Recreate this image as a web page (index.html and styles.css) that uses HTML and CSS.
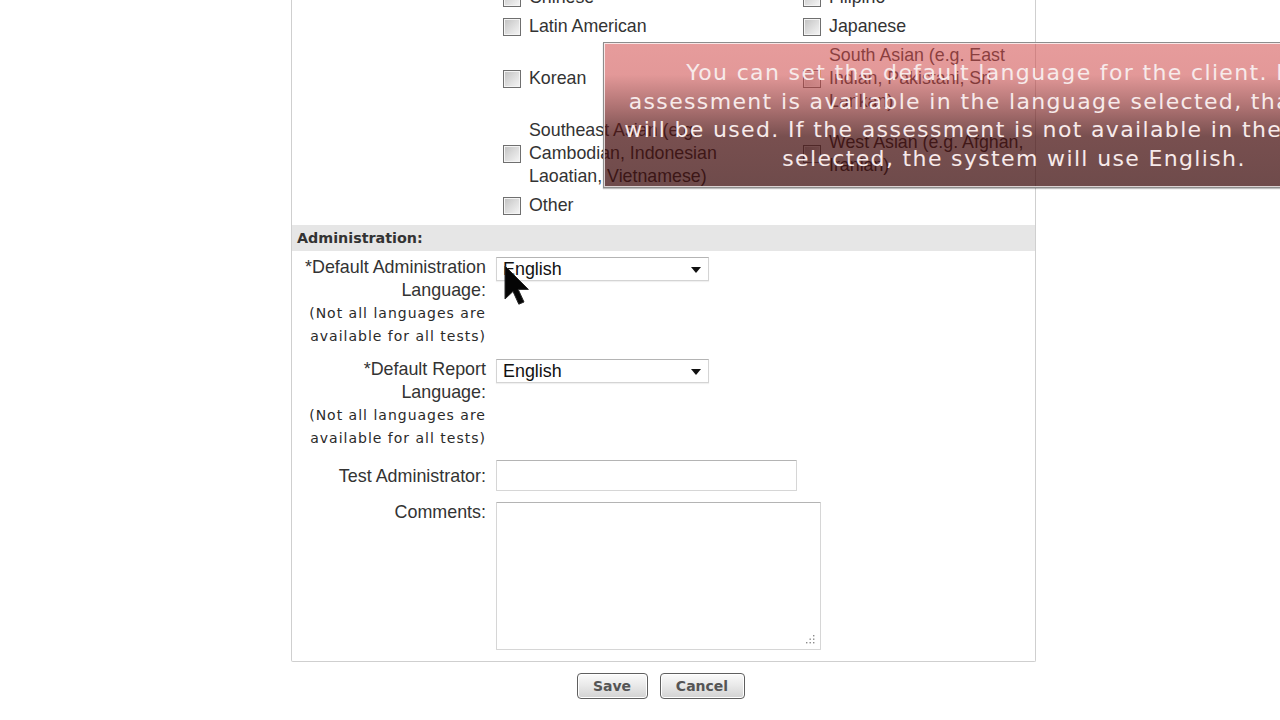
FILE: index.html
```html
<!DOCTYPE html>
<html lang="en">
<head>
<meta charset="utf-8">
<title>Client Details</title>
<link rel="stylesheet" href="styles.css">
</head>
<body>
<div class="page">
  <div class="panel">
    <div class="eth-grid">
      <span class="cb"></span><span class="lbl c1">Chinese</span>
      <span class="cb"></span><span class="lbl c2">Filipino</span>

      <span class="cb"></span><span class="lbl c1">Latin American</span>
      <span class="cb"></span><span class="lbl c2">Japanese</span>

      <span class="cb"></span><span class="lbl c1">Korean</span>
      <span class="cb"></span><span class="lbl c2">South Asian (e.g. East Indian, Pakistani, Sri Lankan)</span>

      <span class="cb"></span><span class="lbl c1">Southeast Asian (e.g. Cambodian, Indonesian Laoatian, Vietnamese)</span>
      <span class="cb"></span><span class="lbl c2">West Asian (e.g. Afghan, Iranian)</span>

      <span class="cb"></span><span class="lbl c1">Other</span>
      <span></span><span></span>
    </div>

    <div class="section-head">Administration:</div>

    <div class="admin-form">
      <div class="f-label">*Default Administration Language:<span class="note">(Not all languages are available for all tests)</span></div>
      <div class="f-ctrl"><div class="select-wrap"><select class="select"><option>English</option></select></div></div>

      <div class="f-label">*Default Report Language:<span class="note">(Not all languages are available for all tests)</span></div>
      <div class="f-ctrl"><div class="select-wrap"><select class="select"><option>English</option></select></div></div>

      <div class="f-label f-label-input">Test Administrator:</div>
      <div class="f-ctrl"><input class="text-input" type="text"></div>

      <div class="f-label">Comments:</div>
      <div class="f-ctrl">
        <div class="ta-wrap">
          <textarea class="textarea"></textarea>
          <svg class="grip" width="9" height="9" viewBox="0 0 9 9"><g fill="#8a8a8a"><rect x="7" y="0" width="1.4" height="1.4"/><rect x="7" y="3.5" width="1.4" height="1.4"/><rect x="3.5" y="3.5" width="1.4" height="1.4"/><rect x="7" y="7" width="1.4" height="1.4"/><rect x="3.5" y="7" width="1.4" height="1.4"/><rect x="0" y="7" width="1.4" height="1.4"/></g></svg>
        </div>
      </div>
    </div>
  </div>

  <div class="actions">
    <button class="btn btn-save" type="button">Save</button>
    <button class="btn btn-cancel" type="button">Cancel</button>
  </div>
</div>

<div class="tooltip">
  You can set the default language for the client. If the<br>
  assessment is available in the language selected, that version<br>
  will be used. If the assessment is not available in the language<br>
  selected, the system will use English.
</div>

<svg class="cursor" width="26" height="42" viewBox="0 0 13 21"><path d="M0.5 0.5 L0.5 17 L4.5 13.2 L7.4 19.6 L10 18.5 L7.1 12.2 L12.2 12.2 Z" fill="#050505" stroke="#2a2a2a" stroke-width="0.5" stroke-linejoin="round"/></svg>
</body>
</html>
```

FILE: styles.css
```css
html, body {
  margin: 0;
  padding: 0;
  background: #ffffff;
  overflow: hidden;
  height: 720px;
}

body {
  font-family: "Liberation Sans", Arial, sans-serif;
  color: #333333;
  position: relative;
}

.page {
  width: 745px;
  margin: -17px 0 0 291px;
}

.panel {
  box-sizing: border-box;
  width: 745px;
  border: 1px solid #cfcfcf;
  border-top: none;
  border-radius: 0 0 2px 2px;
  padding-bottom: 11px;
}

/* ethnicity checkbox grid */
.eth-grid {
  display: grid;
  grid-template-columns: 26px 274px 26px 200px;
  padding-left: 211px;
  margin-bottom: 5px;
}

.eth-grid > span {
  align-self: center;
}

.lbl {
  font-size: 17.8px;
  line-height: 23px;
  padding: 3px 0;
  color: #333333;
}

.lbl.c1 {
  padding-right: 44px;
}

.cb {
  box-sizing: border-box;
  width: 18px;
  height: 18px;
  border: 1px solid #6f6f6f;
  box-shadow: inset 0 0 0 1px #f4f4f4;
  background: linear-gradient(135deg, #c0c0c0 0%, #dadada 45%, #f6f6f6 100%);
  display: block;
}

/* section header */
.section-head {
  height: 26px;
  line-height: 26px;
  background: #e6e6e6;
  padding-left: 5px;
  font-family: "DejaVu Sans", Verdana, sans-serif;
  font-weight: bold;
  font-size: 14.3px;
  color: #333333;
}

/* admin form */
.admin-form {
  display: grid;
  grid-template-columns: 194px 1fr;
  column-gap: 10px;
  row-gap: 10px;
  padding-top: 5px;
}

.f-label {
  text-align: right;
  font-size: 17.9px;
  line-height: 23px;
  color: #333333;
}

.f-label-input {
  padding-top: 5px;
}

.note {
  display: block;
  font-family: "DejaVu Sans", Verdana, sans-serif;
  font-size: 14px;
  letter-spacing: 1px;
  line-height: 23px;
  color: #2a2a2a;
}

.f-ctrl {
  display: flex;
  align-items: flex-start;
}

.select-wrap {
  position: relative;
  margin-top: 1px;
}

.select-wrap::after {
  content: "";
  position: absolute;
  right: 8px;
  top: 10px;
  border-left: 5px solid transparent;
  border-right: 5px solid transparent;
  border-top: 6px solid #111111;
  pointer-events: none;
}

.select {
  -webkit-appearance: none;
  appearance: none;
  box-sizing: border-box;
  width: 213px;
  height: 24px;
  margin: 0;
  padding: 0 0 0 6px;
  border: 1px solid #d4d4d4;
  border-top-color: #b4b4b4;
  border-radius: 0;
  background: #ffffff;
  box-shadow: 0 1px 1px rgba(0, 0, 0, 0.06);
  font-family: "Liberation Sans", Arial, sans-serif;
  font-size: 17.9px;
  color: #111111;
}

.text-input {
  box-sizing: border-box;
  width: 301px;
  height: 31px;
  margin: 0;
  border: 1px solid #d6d6d6;
  border-top-color: #b4b4b4;
  border-radius: 1px;
  background: #ffffff;
}

.ta-wrap {
  position: relative;
  margin-top: 1px;
}

.textarea {
  display: block;
  box-sizing: border-box;
  width: 325px;
  height: 148px;
  margin: 0;
  border: 1px solid #d6d6d6;
  border-top-color: #b4b4b4;
  border-radius: 1px;
  resize: none;
  background: #ffffff;
}

.grip {
  position: absolute;
  right: 6px;
  bottom: 6px;
}

/* buttons */
.actions {
  display: flex;
  justify-content: center;
  gap: 12px;
  margin-top: 11px;
  padding-right: 6px;
}

.btn {
  box-sizing: border-box;
  height: 26px;
  padding: 0;
  border: 1px solid #5f5f5f;
  border-radius: 4px;
  background: linear-gradient(to bottom, #fbfbfb 0%, #e8e8e8 50%, #d2d2d2 100%);
  box-shadow: inset 0 0 0 1px #ffffff;
  font-family: "DejaVu Sans", Verdana, sans-serif;
  font-weight: bold;
  font-size: 14px;
  color: #555555;
}

.btn-save { width: 71px; }
.btn-cancel { width: 85px; }

/* tooltip overlay */
.tooltip {
  position: absolute;
  left: 603px;
  top: 42px;
  box-sizing: border-box;
  width: 822px;
  height: 146px;
  padding-top: 16px;
  border: 1px solid #8d8d8d;
  box-shadow: inset 0 0 0 1px rgba(255, 255, 255, 0.75), 0 1px 1px rgba(0, 0, 0, 0.25);
  background: linear-gradient(to bottom,
    rgba(210, 74, 74, 0.55) 0%,
    rgba(205, 72, 72, 0.56) 22%,
    rgba(130, 40, 40, 0.66) 45%,
    rgba(70, 14, 14, 0.73) 65%,
    rgba(60, 12, 12, 0.74) 100%);
  font-family: "DejaVu Sans", Verdana, sans-serif;
  font-size: 22px;
  letter-spacing: 1.35px;
  line-height: 28.5px;
  text-align: center;
  color: #f7eaea;
  white-space: nowrap;
}

.cursor {
  position: absolute;
  left: 504px;
  top: 265px;
}
```
